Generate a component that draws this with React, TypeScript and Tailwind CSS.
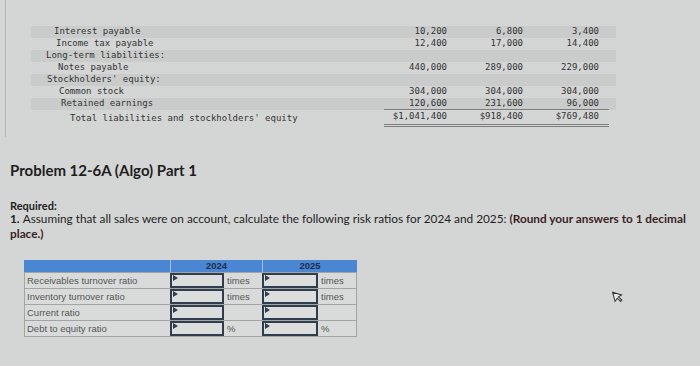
import React from "react";

type Line = {
  label: string;
  indent: number;
  vals?: [string, string, string];
  shade: boolean;
  rule?: "single";
};

const LINES: Line[] = [
  { label: "Interest payable", indent: 23, vals: ["10,200", "6,800", "3,400"], shade: true },
  { label: "Income tax payable", indent: 25, vals: ["12,400", "17,000", "14,400"], shade: false },
  { label: "Long-term liabilities:", indent: 15, shade: true },
  { label: "Notes payable", indent: 27, vals: ["440,000", "289,000", "229,000"], shade: false },
  { label: "Stockholders' equity:", indent: 16, shade: true },
  { label: "Common stock", indent: 28, vals: ["304,000", "304,000", "304,000"], shade: false },
  { label: "Retained earnings", indent: 30, vals: ["120,600", "231,600", "96,000"], shade: true, rule: "single" },
];

const RATIOS = [
  { name: "Receivables turnover ratio", unit: "times" },
  { name: "Inventory turnover ratio", unit: "times" },
  { name: "Current ratio", unit: "" },
  { name: "Debt to equity ratio", unit: "%" },
];

function Values({ vals, className }: { vals?: string[]; className?: string }) {
  return (
    <div className={`flex w-[225px] h-full items-center pr-[10px] ${className ?? ""}`}>
      <span className="w-[63px] text-right">{vals?.[0]}</span>
      <span className="w-[76px] text-right">{vals?.[1]}</span>
      <span className="w-[76px] text-right">{vals?.[2]}</span>
    </div>
  );
}

function AnswerInput() {
  return (
    <div className="relative h-full border-2 border-[#2f3d4f] bg-[#dcdedd]">
      <span className="absolute left-[1px] top-[0px] h-0 w-0 border-y-[3px] border-l-[5px] border-y-transparent border-l-[#2f3d4f]" />
    </div>
  );
}

export default function App() {
  return (
    <div className="relative w-[700px] h-[366px] overflow-hidden bg-[#d4d6d5] text-[#222]">
      {/* balance sheet excerpt */}
      <div className="ml-[5px] border-l border-[#b4b6b5] pt-[26px] pl-[25px] pb-[10px] font-['DejaVu_Sans_Mono',monospace] text-[9px] text-[#333]">
        {LINES.map((l) => (
          <div
            key={l.label}
            className={`flex h-[12px] w-[585px] items-center ${l.shade ? "bg-[#cacccb]" : ""}`}
          >
            <div className="w-[353px] whitespace-pre" style={{ paddingLeft: l.indent }}>
              {l.label}
            </div>
            <Values vals={l.vals} className={l.rule ? "border-b border-[#7d7f7e]" : ""} />
          </div>
        ))}
        <div className="flex h-[17px] w-[585px] items-center">
          <div className="w-[353px] pl-[39px]">Total liabilities and stockholders' equity</div>
          <Values
            vals={["$1,041,400", "$918,400", "$769,480"]}
            className="border-b-[3px] border-double border-[#7d7f7e]"
          />
        </div>
      </div>

      {/* problem text */}
      <div className="px-[10px] font-['Lato',sans-serif] text-[#1e1e1e]">
        <h2 className="mt-[25px] text-[15px] leading-[17px] font-bold">Problem 12-6A (Algo) Part 1</h2>
        <p className="mt-[20px] text-[11px] leading-[13px] font-bold">Required:</p>
        <div className="text-[11.8px] leading-[14.5px]">
          <div className="flex gap-[3px] whitespace-nowrap">
            <b>1.</b>
            <span>Assuming that all sales were on account, calculate the following risk ratios for 2024 and 2025:</span>
            <b className="text-[#3a1e1e]">(Round your answers to 1 decimal</b>
          </div>
          <b className="block text-[#3a1e1e]">place.)</b>
        </div>
      </div>

      {/* ratios table */}
      <div className="ml-[24px] mt-[19px] w-[333px] font-['Liberation_Sans',sans-serif] text-[9.5px] text-[#555]">
        <div className="grid h-[12px] grid-cols-[146px_92px_95px] bg-[#4a86d2] font-bold text-[#1b2d4a]">
          <div />
          <div className="border-l border-[#9fbde6] text-center leading-[12px]">2024</div>
          <div className="border-l border-[#9fbde6] text-center leading-[12px]">2025</div>
        </div>
        <div className="border-x border-b border-[#a3a5a4]">
          {RATIOS.map((r) => (
            <div
              key={r.name}
              className="grid h-[16px] grid-cols-[145px_54px_38px_56px_38px] border-t border-[#a3a5a4] bg-[#d9dbda]"
            >
              <div className="pl-[2px] leading-[15px]">{r.name}</div>
              <AnswerInput />
              <div className="pl-[3px] leading-[15px]">{r.unit}</div>
              <AnswerInput />
              <div className="pl-[3px] leading-[15px]">{r.unit}</div>
            </div>
          ))}
        </div>
      </div>

      {/* mouse pointer */}
      <svg
        className="absolute left-[612px] top-[290px]"
        width="12"
        height="14"
        viewBox="0 0 12 14"
        fill="#e8eae9"
        stroke="#333"
        strokeWidth="1"
      >
        <path d="M2 1 L10 6 L6.5 7 L9 11 L7.5 12 L5 8 L2 10.5 Z" transform="rotate(-15 6 7)" />
      </svg>
    </div>
  );
}
